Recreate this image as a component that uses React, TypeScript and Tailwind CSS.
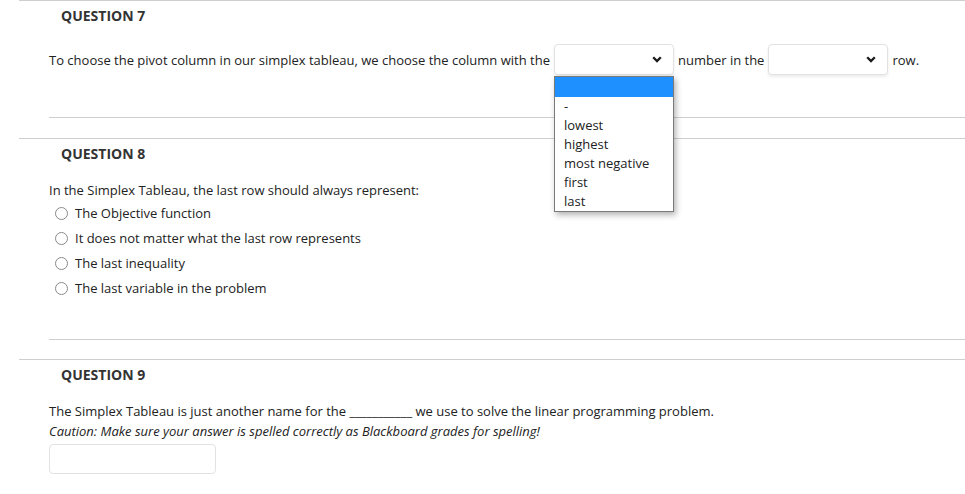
import React from 'react'

const opts=['','-','lowest','highest','most negative','first','last']

function Chevron() {
  return (
    <svg width="10" height="7" viewBox="0 0 10 7" className="absolute right-[12px] top-[12px]">
      <path d="M1.2 1.2 L5 5 L8.8 1.2" fill="none" stroke="#1a1a1a" strokeWidth="2.3" />
    </svg>
  )
}

function SelectBox({open}:{open?:boolean}) {
  return (
    <span className="relative inline-block mx-[4px] w-[120px] h-[31px] align-middle">
      <span className="block w-full h-full bg-white border border-[#e2e2e2] rounded-[4px] shadow-[0_2px_3px_rgba(0,0,0,0.08)]"></span>
      <Chevron />
      {open&&(
        <div className="absolute left-0 top-[32px] w-[120px] bg-white border border-[#7a7a7a] shadow-[2px_3px_6px_rgba(0,0,0,0.3)] z-10">
          {opts.map((o,i)=>(
            <div key={i} className={`h-[19px] leading-[19px] pl-[9px] text-[13px] text-[#222] ${i===0?'bg-[#1e90ff] h-[20px]':''}`}>{o}</div>
          ))}
        </div>
      )}
    </span>
  )
}

function Radio({label}:{label:string}) {
  return (
    <div className="flex items-center h-[25px]">
      <span className="w-[13px] h-[13px] rounded-full border border-[#8a8a8a] bg-white ml-[6px] mr-[7px] mt-[2px]"></span>
      <span>{label}</span>
    </div>
  )
}

export default function App() {
  return (
    <div className="w-[965px] h-[494px] bg-white overflow-hidden text-[13px] text-[#222]" style={{fontFamily:'"Open Sans", "Liberation Sans", sans-serif'}}>
      {/* Q7 */}
      <div className="ml-[19px] border-t border-[#cfcfcf]">
        <h3 className="pl-[42px] pt-[5px] h-[26px] leading-[20px] text-[14px] font-bold text-[#333]">QUESTION 7</h3>
        <div className="ml-[30px] mt-[17px] flex items-center h-[31px] leading-[20px]">
          <span>To choose the pivot column in our simplex tableau, we choose the column with the</span>
          <SelectBox open />
          <span>number in the</span>
          <SelectBox />
          <span>row.</span>
        </div>
        <div className="ml-[30px] mt-[42px] border-t border-[#cfcfcf] h-[21px]"></div>
      </div>
      {/* Q8 */}
      <div className="ml-[19px] border-t border-[#cfcfcf]">
        <h3 className="pl-[42px] pt-[5px] h-[26px] leading-[20px] text-[14px] font-bold text-[#333]">QUESTION 8</h3>
        <div className="ml-[30px] mt-[15px] leading-[20px]">
          <p>In the Simplex Tableau, the last row should always represent:</p>
          <Radio label="The Objective function" />
          <Radio label="It does not matter what the last row represents" />
          <Radio label="The last inequality" />
          <Radio label="The last variable in the problem" />
        </div>
        <div className="ml-[30px] mt-[39px] border-t border-[#cfcfcf] h-[20px]"></div>
      </div>
      {/* Q9 */}
      <div className="ml-[19px] border-t border-[#cfcfcf]">
        <h3 className="pl-[42px] pt-[5px] h-[26px] leading-[20px] text-[14px] font-bold text-[#333]">QUESTION 9</h3>
        <div className="ml-[30px] mt-[15px] leading-[20px]">
          <p>The Simplex Tableau is just another name for the ___________ we use to solve the linear programming problem.</p>
          <p className="italic">Caution: Make sure your answer is spelled correctly as Blackboard grades for spelling!</p>
          <div className="mt-[3px] w-[167px] h-[30px] border border-[#e2e2e2] rounded-[4px] bg-white"></div>
        </div>
      </div>
    </div>
  )
}
